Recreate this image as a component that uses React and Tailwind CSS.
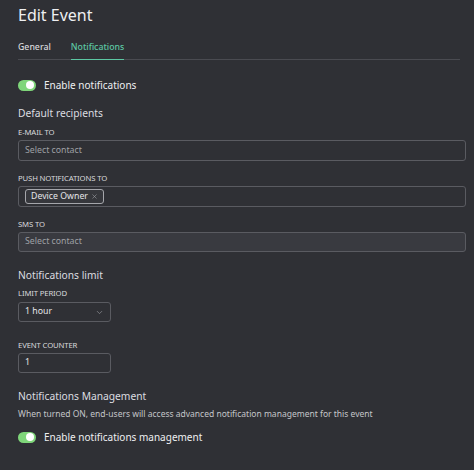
import { ChevronDown, X } from 'lucide-react'

const font = { fontFamily: '"Noto Sans", "Open Sans", sans-serif' }

function Toggle() {
  return (
    <span className="relative inline-flex h-[11px] w-[18px] items-center rounded-full bg-[#7fd67a]">
      <span className="absolute right-[2px] h-[8px] w-[8px] rounded-full bg-white" />
    </span>
  )
}

function Label({ className = '', children }) {
  return <p className={`text-[7.75px] uppercase tracking-[-0.02em] text-[#d8d9dc] leading-[10px] ${className}`}>{children}</p>
}

const box = 'rounded-[3px] border border-[#5a5b61] flex items-center text-[8.75px]'

export default function App() {
  return (
    <div className="w-[474px] h-[470px] bg-[#2f3035] text-[#e4e5e8] px-[18px] pt-[4px] overflow-hidden" style={font}>
      <h1 className="text-[16px] leading-[22px] text-[#eeeff1]">Edit Event</h1>

      <div className="mt-[15px] flex gap-[20px] border-b border-[#4a4b51] w-[442px] text-[8.75px] leading-[12px] font-medium">
        <span className="pb-[6px] text-[#d8d9dc]">General</span>
        <span className="pb-[6px] -mb-px text-[#5cc7a3] border-b border-[#5cc7a3]">Notifications</span>
      </div>

      <div className="mt-[19px] h-[12px] flex items-center gap-[8px]">
        <Toggle />
        <span className="text-[10px] leading-[12px] text-[#eeeff1]">Enable notifications</span>
      </div>

      <p className="mt-[14px] text-[10.25px] leading-[16px] text-[#dcdde0]">Default recipients</p>

      <Label className="mt-[6px]">E-mail to</Label>
      <div className={`${box} mt-[3px] h-[21px] w-[448px] px-[6px] text-[#9fa0a5]`}>Select contact</div>

      <Label className="mt-[12px]">Push notifications to</Label>
      <div className={`${box} mt-[3px] h-[21px] w-[448px] px-[6px]`}>
        <span className="h-[15px] flex items-center gap-[3px] rounded-[3px] border border-[#a5a6ab] bg-[#36373c] px-[5px] text-[#e4e5e8]">
          Device Owner <X size={7} strokeWidth={2} className="text-[#9fa0a5]" />
        </span>
      </div>

      <Label className="mt-[12px]">SMS to</Label>
      <div className={`${box} mt-[3px] h-[20px] w-[448px] px-[6px] bg-[#393a40] text-[#9fa0a5]`}>Select contact</div>

      <p className="mt-[15px] text-[10.25px] leading-[16px] text-[#dcdde0]">Notifications limit</p>

      <Label className="mt-[5px]">Limit period</Label>
      <div className={`${box} mt-[4px] h-[20px] w-[93px] justify-between px-[6px] text-[#e4e5e8]`}>
        1 hour <ChevronDown size={9} className="text-[#8a8b90]" />
      </div>

      <Label className="mt-[18px]">Event counter</Label>
      <div className={`${box} mt-[3px] h-[20px] w-[93px] px-[6px] text-[#e4e5e8]`}>1</div>

      <p className="mt-[15px] text-[10.25px] leading-[16px] text-[#dcdde0]">Notifications Management</p>
      <p className="mt-[4px] text-[8.5px] leading-[12px] text-[#c4c5c9]">When turned ON, end-users will access advanced notification management for this event</p>

      <div className="mt-[11px] h-[12px] flex items-center gap-[8px]">
        <Toggle />
        <span className="text-[10px] leading-[12px] text-[#eeeff1]">Enable notifications management</span>
      </div>
    </div>
  )
}
